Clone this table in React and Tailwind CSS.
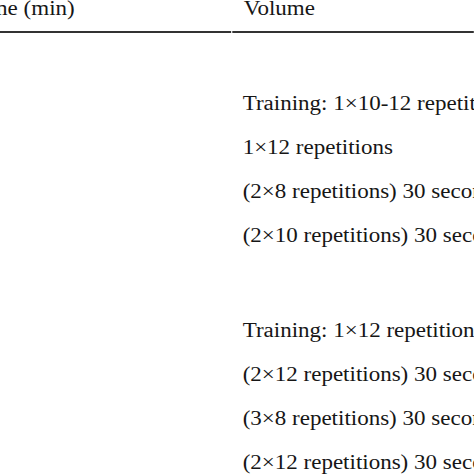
export default function App() {
  const blocks = [
    [
      "Training: 1×10-12 repetitions",
      "1×12 repetitions",
      "(2×8 repetitions) 30 seconds rest",
      "(2×10 repetitions) 30 seconds rest",
    ],
    [
      "Training: 1×12 repetitions",
      "(2×12 repetitions) 30 seconds rest",
      "(3×8 repetitions) 30 seconds rest",
      "(2×12 repetitions) 30 seconds rest",
    ],
  ];

  return (
    <div className="w-[474px] h-[474px] overflow-hidden bg-white text-[#161616] font-['Liberation_Serif',serif] text-[20px]">
      <div className="w-[412px] origin-top-left scale-x-[1.15] whitespace-nowrap">
        {/* header */}
        <div className="grid grid-cols-[201px_210px] gap-x-[1px]">
          <div className="h-[33px] border-b-2 border-[#333] overflow-hidden leading-[16px]">
            <span className="block -ml-[26px]">Time (min)</span>
          </div>
          <div className="h-[33px] border-b-2 border-[#333] pl-[10px] leading-[16px]">Volume</div>
        </div>

        {/* rows */}
        {blocks.map((rows, i) => (
          <div key={i} className={i === 0 ? "mt-[48px]" : "mt-[51px]"}>
            {rows.map((r) => (
              <div key={r} className="pl-[211px] leading-[44px] h-[44px]">
                {r}
              </div>
            ))}
          </div>
        ))}
      </div>
    </div>
  );
}
